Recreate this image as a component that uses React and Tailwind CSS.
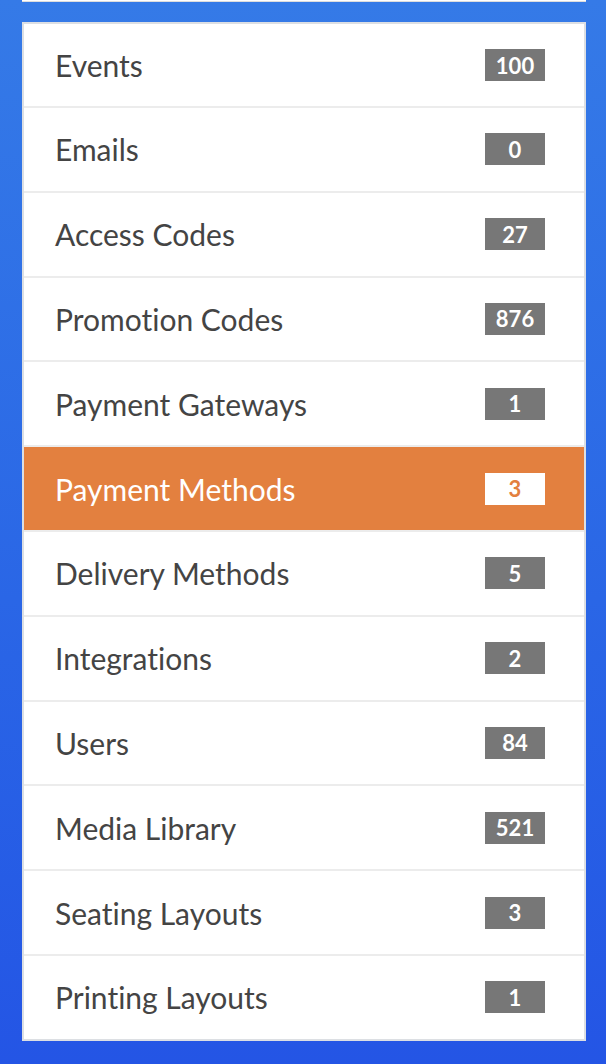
import React from 'react';

const items = [
	{ name: 'Events', count: 100 },
	{ name: 'Emails', count: 0 },
	{ name: 'Access Codes', count: 27 },
	{ name: 'Promotion Codes', count: 876 },
	{ name: 'Payment Gateways', count: 1 },
	{ name: 'Payment Methods', count: 3, active: true },
	{ name: 'Delivery Methods', count: 5 },
	{ name: 'Integrations', count: 2 },
	{ name: 'Users', count: 84 },
	{ name: 'Media Library', count: 521 },
	{ name: 'Seating Layouts', count: 3 },
	{ name: 'Printing Layouts', count: 1 },
];

export default function App() {
	return (
		<div
			className="min-h-[1064px] bg-gradient-to-b from-[#357ae7] to-[#2455e5] pl-[22px] pr-[20px] [font-variant-ligatures:none]"
			style={{ fontFamily: 'Lato, "Open Sans", sans-serif' }}
		>
			{/* bottom edge of the panel above */}
			<div className="h-[2px] bg-white border-b border-[#ddd]" />

			<div className="mt-[20px] bg-white border-2 border-[#dcdfe3]">
				{items.map((item, index) => (
					<div
						key={index}
						className={
							'flex items-center justify-between pl-[31px] pr-[39px] ' +
							(index > 0 ? 'h-[84.8px] border-t-2 border-[#ececec] ' : 'h-[82px] ') +
							(item.active ? 'bg-[#e3803f] text-white' : 'text-[#444]')
						}
					>
						<span className="text-[30px] leading-none">{item.name}</span>
						<span
							className={
								'w-[60px] h-[32px] flex items-center justify-center text-[22px] font-bold ' +
								(item.active ? 'bg-white text-[#e3803f]' : 'bg-[#777] text-white')
							}
						>
							{item.count}
						</span>
					</div>
				))}
			</div>
		</div>
	);
}
